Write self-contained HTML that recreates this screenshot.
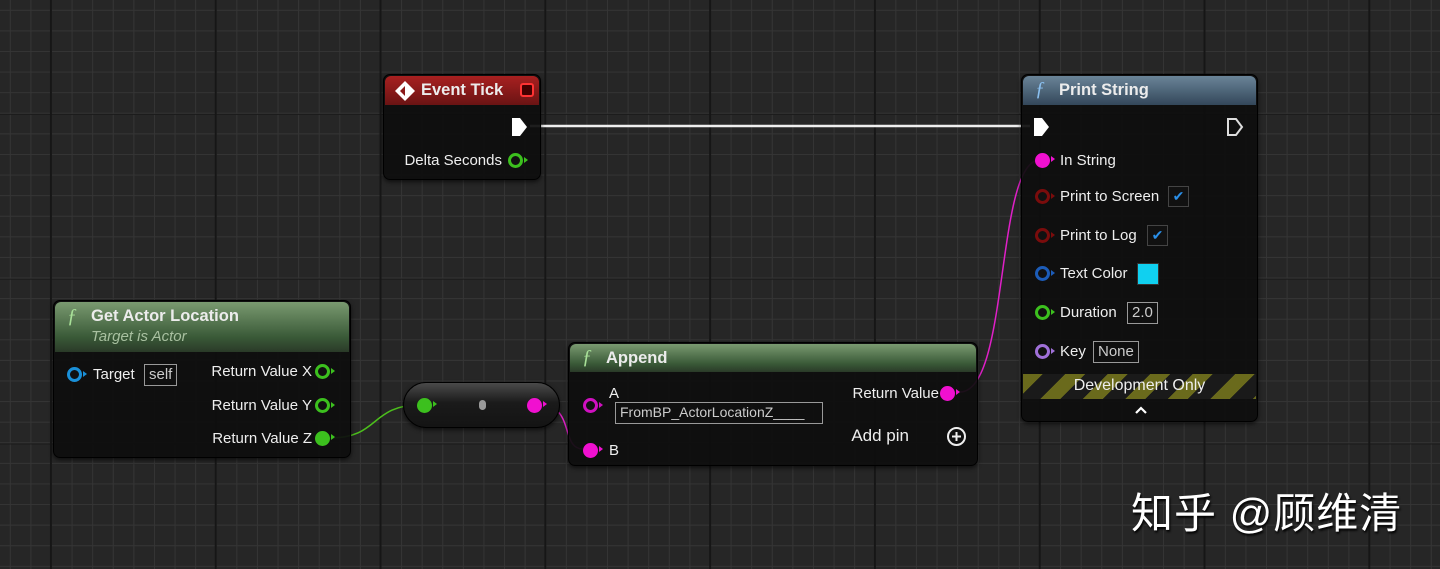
<!DOCTYPE html>
<html><head><meta charset="utf-8"><style>
*{margin:0;padding:0;box-sizing:border-box}
body{width:1440px;height:569px;overflow:hidden;position:relative;background-color:#262626;
background-image:
linear-gradient(90deg,transparent 50px,#161616 50px,#161616 52px,transparent 52px),
linear-gradient(0deg,transparent 51px,#1a1a1a 51px,#1a1a1a 52px,transparent 52px),
linear-gradient(90deg,transparent 10px,#353535 10px,#353535 11px,transparent 11px),
linear-gradient(0deg,transparent 10px,#353535 10px,#353535 11px,transparent 11px);
background-size:164.8px 164.8px,164.8px 164.8px,20.6px 20.6px,20.6px 20.6px;
background-position:0 0,0 1px,0 0,0 0;
font-family:"Liberation Sans",sans-serif;color:#e8e8e8}
.n{position:absolute;background:rgba(14,14,14,.93);border:1px solid #000;border-radius:7px;box-shadow:0 2px 4px rgba(0,0,0,.6)}
.h{position:absolute;left:1px;right:1px;top:1px;border-radius:6px 6px 0 0;font-weight:bold;font-size:16.5px;color:#ececec;padding-left:36px}
.t{position:absolute;font-size:15px;white-space:nowrap;color:#eee}
.p{position:absolute;width:15px;height:15px;border-radius:50%}
.p:after{content:"";position:absolute;right:-5px;top:3px;border-left:4px solid currentColor;border-top:3.5px solid transparent;border-bottom:3.5px solid transparent}
.ho{background:#111;border:3px solid currentColor}
.ho:after{right:-8px;top:1px}
.so{background:currentColor}
.box{position:absolute;border:1.5px solid #999;font-size:15px;color:#ccc;padding:0 4px;height:22px;line-height:19px}
.f{font-family:"Liberation Serif",serif;font-style:italic;font-weight:normal;position:absolute;left:12px;font-size:20px;top:-1px}
</style></head><body>
<svg style="position:absolute;left:0;top:0" width="1440" height="569">
<line x1="530" y1="126" x2="1030" y2="126" stroke="#eee" stroke-width="2.5"/>
<path d="M330 438 C380 438,370 405,420 405" stroke="#4cbf1c" stroke-width="1.5" fill="none"/>
<path d="M540 405 C575 405,560 449,583 449" stroke="#e020c8" stroke-width="1.5" fill="none"/>
<path d="M960 392 C1010 392,995 160,1040 160" stroke="#e020c8" stroke-width="1.5" fill="none"/>
</svg>

<!-- Event Tick -->
<div class="n" style="left:383px;top:74px;width:158px;height:106px">
<div class="h" style="height:29px;background:linear-gradient(#a82020,#6a1414);line-height:28px">Event Tick</div>
<svg style="position:absolute;left:10px;top:5px" width="22" height="22"><path d="M11 1 L21 11 L11 21 L1 11Z" fill="#fff"/><path d="M11 6 L6 11 L11 16 Z" fill="#8a1a1a"/></svg>
<div style="position:absolute;right:6px;top:8px;width:14px;height:14px;border:2px solid #f33;background:#400;border-radius:3px"></div>
<svg style="position:absolute;left:127px;top:42px" width="18" height="20"><path d="M1 1 H9 L16 10 L9 19 H1Z" fill="#fff"/></svg>
<div class="t" style="right:38px;top:77px">Delta Seconds</div>
<div class="p ho" style="color:#3cc01e;left:124px;top:78px"></div>
</div>

<!-- Print String -->
<div class="n" style="left:1021px;top:74px;width:237px;height:348px">
<div class="h" style="height:29px;background:linear-gradient(#6a8498,#33475a);line-height:28px"><span class="f" style="color:#8ac0f0">ƒ</span>Print String</div>
<svg style="position:absolute;left:11px;top:42px" width="18" height="20"><path d="M1 1 H9 L16 10 L9 19 H1Z" fill="#fff"/></svg>
<svg style="position:absolute;left:204px;top:42px" width="20" height="20"><path d="M2 2 H10 L16 10 L10 18 H2Z" fill="none" stroke="#ddd" stroke-width="2"/></svg>
<div class="p so" style="color:#f010d0;left:13px;top:78px"></div><div class="t" style="left:38px;top:77px">In String</div>
<div class="p ho" style="color:#7a0c0c;left:13px;top:114px"></div><div class="t" style="left:38px;top:113px">Print to Screen</div>
<div style="position:absolute;left:146px;top:111px;width:21px;height:21px;border:1px solid #444;background:#111;color:#2a8fe8;font-size:14px;text-align:center;line-height:19px">✔</div>
<div class="p ho" style="color:#7a0c0c;left:13px;top:153px"></div><div class="t" style="left:38px;top:152px">Print to Log</div>
<div style="position:absolute;left:125px;top:150px;width:21px;height:21px;border:1px solid #444;background:#111;color:#2a8fe8;font-size:14px;text-align:center;line-height:19px">✔</div>
<div class="p ho" style="color:#1c5cb8;left:13px;top:191px"></div><div class="t" style="left:38px;top:190px">Text Color</div>
<div style="position:absolute;left:115px;top:188px;width:22px;height:22px;background:#10d0f0;border:1px solid #333"></div>
<div class="p ho" style="color:#3cc01e;left:13px;top:230px"></div><div class="t" style="left:38px;top:229px">Duration</div>
<div class="box" style="left:105px;top:227px">2.0</div>
<div class="p ho" style="color:#a070d8;left:13px;top:269px"></div><div class="t" style="left:38px;top:268px">Key</div>
<div class="box" style="left:71px;top:266px">None</div>
<div style="position:absolute;left:1px;right:1px;top:299px;height:25px;background:repeating-linear-gradient(135deg,#6a6a1c 0 14px,#1a1a1a 14px 30px)"></div>
<div class="t" style="left:0;right:0;text-align:center;top:302px;font-size:16px">Development Only</div>
<svg style="position:absolute;left:112px;top:330px" width="14" height="10"><path d="M2 8 L7 3 L12 8" stroke="#fff" stroke-width="2.2" fill="none"/></svg>
</div>

<!-- Get Actor Location -->
<div class="n" style="left:53px;top:300px;width:298px;height:158px">
<div class="h" style="height:50px;background:linear-gradient(#7a9a70,#3a5a38 70%,#2a3a28);padding-top:5px"><span class="f" style="color:#a8e098;top:3px">ƒ</span>Get Actor Location
<div style="font-weight:normal;font-style:italic;font-size:15px;color:#a8c0a0;margin-top:2px">Target is Actor</div></div>
<div class="p ho" style="color:#1a90d8;left:13px;top:66px"></div><div class="t" style="left:39px;top:65px">Target</div>
<div class="box" style="left:90px;top:63px">self</div>
<div class="t" style="right:38px;top:62px">Return Value X</div><div class="p ho" style="color:#3cc01e;right:20px;top:63px"></div>
<div class="t" style="right:38px;top:96px">Return Value Y</div><div class="p ho" style="color:#3cc01e;right:20px;top:97px"></div>
<div class="t" style="right:38px;top:129px">Return Value Z</div><div class="p so" style="color:#3cc01e;right:20px;top:130px"></div>
</div>

<!-- conversion node -->
<div class="n" style="left:403px;top:382px;width:157px;height:46px;border-radius:23px;background:linear-gradient(#4a4a4a,#1a1a1a 45%,#141414)">
<div class="p so" style="color:#3cc01e;left:13px;top:15px"></div>
<div style="position:absolute;left:75px;top:17px;width:7px;height:10px;border-radius:4px;background:#999"></div>
<div class="p so" style="color:#f010d0;left:123px;top:15px"></div>
</div>

<!-- Append -->
<div class="n" style="left:568px;top:342px;width:410px;height:124px">
<div class="h" style="height:28px;background:linear-gradient(#7a9a70,#3a5a38 70%,#2a3a28);line-height:28px"><span class="f" style="color:#a8e098">ƒ</span>Append</div>
<div class="p ho" style="color:#d010c0;left:14px;top:55px"></div><div class="t" style="left:40px;top:42px">A</div>
<div class="box" style="left:46px;top:59px;width:208px;font-size:14px">FromBP_ActorLocationZ____</div>
<div class="p so" style="color:#f010d0;left:14px;top:100px"></div><div class="t" style="left:40px;top:99px">B</div>
<div class="t" style="right:38px;top:42px">Return Value</div><div class="p so" style="color:#f010d0;right:22px;top:43px"></div>
<div class="t" style="right:68px;top:83px;font-size:17px">Add pin</div>
<svg style="position:absolute;right:10px;top:83px" width="21" height="21"><circle cx="10.5" cy="10.5" r="8.5" stroke="#eee" stroke-width="2" fill="none"/><path d="M10.5 6v9M6 10.5h9" stroke="#eee" stroke-width="2"/></svg>
</div>

<div style="position:absolute;left:1131px;top:480px;font-size:42px;font-family:'Liberation Sans','Noto Sans CJK SC',sans-serif;color:#fff;text-shadow:1px 2px 2px #000;white-space:nowrap;letter-spacing:1px">知乎 @顾维清</div>
</body></html>
